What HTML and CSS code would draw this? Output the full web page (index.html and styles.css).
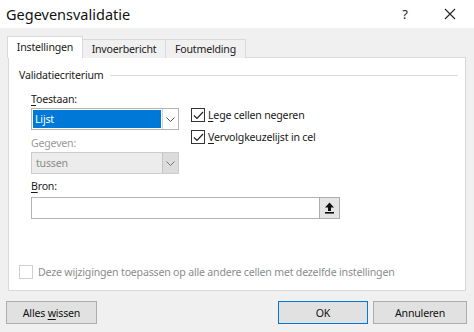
FILE: index.html
```html
<!DOCTYPE html>
<html lang="nl">
<head>
  <meta charset="UTF-8">
  <title>Gegevensvalidatie</title>
  <link rel="stylesheet" href="styles.css">
</head>
<body>
  <div class="titlebar">
    <span class="title">Gegevensvalidatie</span>
    <span class="help">?</span>
    <span class="close">
      <svg width="12" height="12" viewBox="0 0 12 12"><path d="M1 1 L11 11 M11 1 L1 11" stroke="#222" stroke-width="1.1" fill="none"/></svg>
    </span>
  </div>

  <div class="dialog">
    <div class="tabs">
      <div class="tab active">Instellingen</div>
      <div class="tab">Invoerbericht</div>
      <div class="tab">Foutmelding</div>
    </div>

    <div class="panel">
      <div class="legend">
        <span>Validatiecriterium</span>
        <div class="rule"></div>
      </div>

      <div class="criteria">
        <div class="left-col">
          <label class="label"><u>T</u>oestaan:</label>
          <div class="select">
            <div class="select-value"><span class="selected">Lijst</span></div>
            <div class="select-btn">
              <svg width="9" height="5" viewBox="0 0 9 5"><path d="M0.5 0.5 L4.5 4.5 L8.5 0.5" stroke="#555" fill="none"/></svg>
            </div>
          </div>
          <label class="label disabled">Gegeven:</label>
          <div class="select is-disabled">
            <div class="select-value">tussen</div>
            <div class="select-btn">
              <svg width="9" height="5" viewBox="0 0 9 5"><path d="M0.5 0.5 L4.5 4.5 L8.5 0.5" stroke="#777" fill="none"/></svg>
            </div>
          </div>
        </div>
        <div class="right-col">
          <div class="check-row">
            <span class="box checked"><svg width="11" height="9" viewBox="0 0 11 9"><path d="M1 4.5 L4 7.5 L10 1" stroke="#222" stroke-width="1.2" fill="none"/></svg></span>
            <span><u>L</u>ege cellen negeren</span>
          </div>
          <div class="check-row">
            <span class="box checked"><svg width="11" height="9" viewBox="0 0 11 9"><path d="M1 4.5 L4 7.5 L10 1" stroke="#222" stroke-width="1.2" fill="none"/></svg></span>
            <span><u>V</u>ervolgkeuzelijst in cel</span>
          </div>
        </div>
      </div>

      <div class="source">
        <label class="label"><u>B</u>ron:</label>
        <div class="source-field">
          <div class="source-input"></div>
          <div class="source-btn">
            <svg width="11" height="12" viewBox="0 0 11 12"><path d="M5.5 0.5 L10 5.5 L7 5.5 L7 9 L4 9 L4 5.5 L1 5.5 Z" fill="#111"/><rect x="1" y="10" width="9" height="1.6" fill="#111"/></svg>
          </div>
        </div>
      </div>

      <div class="apply-row">
        <span class="box faded"></span>
        <span>Deze wijzigingen toepassen op alle andere cellen met dezelfde instellingen</span>
      </div>
    </div>

    <div class="buttons">
      <button class="btn">Alles <u>w</u>issen</button>
      <div class="spacer"></div>
      <button class="btn default">OK</button>
      <button class="btn">Annuleren</button>
    </div>
  </div>
</body>
</html>
```

FILE: styles.css
```css
* {
  box-sizing: border-box;
}

body {
  margin: 0;
  width: 474px;
  height: 332px;
  overflow: hidden;
  background: #f0f0f0;
  font-family: "Segoe UI", "Noto Sans", sans-serif;
  font-size: 10.6px;
  letter-spacing: -0.2px;
  color: #1a1a1a;
  white-space: nowrap;
}

u {
  text-decoration-thickness: 1px;
  text-underline-offset: 2px;
}

/* Title bar */
.titlebar {
  height: 28px;
  background: #fff;
  display: flex;
  align-items: center;
  padding-left: 6px;
  letter-spacing: 0;
}

.title {
  font-size: 14.5px;
  color: #111;
  flex: 1;
}

.help {
  font-size: 13px;
  width: 46px;
  text-align: center;
}

.close {
  width: 46px;
  display: flex;
  justify-content: center;
  padding-right: 2px;
}

/* Dialog body */
.dialog {
  padding: 9px 8px 0 8px;
}

.tabs {
  display: flex;
  align-items: flex-end;
  height: 21px;
  position: relative;
  z-index: 1;
  margin-bottom: -1px;
}

.tab {
  height: 19px;
  border: 1px solid #d9d9d9;
  border-bottom: none;
  border-left: none;
  background: #f0f0f0;
  display: flex;
  align-items: center;
  justify-content: center;
  padding-bottom: 1px;
}

.tab.active {
  width: 76px;
  height: 22px;
  background: #fff;
  border-left: 1px solid #d9d9d9;
  margin-left: -1px;
  padding-bottom: 2px;
}

.tab:nth-child(2) {
  width: 83px;
}

.tab:nth-child(3) {
  width: 80px;
}

.panel {
  background: #fff;
  border: 1px solid #d9d9d9;
  height: 234px;
  padding: 9px 7px 0 10px;
  display: flex;
  flex-direction: column;
}

.legend {
  display: flex;
  align-items: center;
  gap: 6px;
  height: 16px;
}

.rule {
  flex: 1;
  height: 1px;
  background: #dcdcdc;
}

.criteria {
  display: flex;
  padding-left: 12px;
  margin-top: 8px;
}

.left-col {
  width: 148px;
  display: flex;
  flex-direction: column;
}

.label {
  height: 16px;
  line-height: 16px;
}

.label.disabled {
  color: #9a9a9a;
  margin-top: 5px;
}

.select {
  height: 22px;
  border: 1px solid #b4b4b4;
  display: flex;
  margin-top: 1px;
}

.select-value {
  flex: 1;
  padding: 1px;
  display: flex;
}

.selected {
  flex: 1;
  background: #0078d7;
  color: #fff;
  padding-left: 2px;
  line-height: 18px;
}

.select-btn {
  width: 16px;
  border-left: 1px solid #d4d4d4;
  display: flex;
  align-items: center;
  justify-content: center;
  background: #fff;
}

.select.is-disabled {
  background: #ececec;
  border-color: #cccccc;
}

.select.is-disabled .select-value {
  color: #8a8a8a;
  padding-left: 4px;
  align-items: center;
}

.select.is-disabled .select-btn {
  background: #dcdcdc;
  border-left-color: #c4c4c4;
}

.right-col {
  margin-left: 12px;
  padding-top: 17px;
  display: flex;
  flex-direction: column;
  gap: 8px;
}

.check-row {
  display: flex;
  align-items: center;
  gap: 3px;
  height: 14px;
}

.box {
  width: 14px;
  height: 14px;
  border: 1px solid #333;
  background: #fff;
  display: flex;
  align-items: center;
  justify-content: center;
}

.box.faded {
  border-color: #cfcfcf;
}

.source {
  padding-left: 12px;
  margin-top: 4px;
  display: flex;
  flex-direction: column;
}

.source-field {
  display: flex;
  width: 309px;
  height: 22px;
  margin-top: 3px;
}

.source-input {
  flex: 1;
  border: 1px solid #b4b4b4;
  border-right: none;
}

.source-btn {
  width: 21px;
  border: 1px solid #adadad;
  background: #e5e5e5;
  display: flex;
  align-items: center;
  justify-content: center;
}

.apply-row {
  margin-top: auto;
  margin-bottom: 11px;
  display: flex;
  align-items: center;
  gap: 5px;
  color: #8c8c8c;
}

/* Buttons */
.buttons {
  display: flex;
  margin-top: 10px;
  margin-left: -2px;
  gap: 5px;
}

.spacer {
  flex: 1;
}

.btn {
  height: 23px;
  width: 91px;
  background: #e1e1e1;
  border: 1px solid #adadad;
  font-family: inherit;
  font-size: 10.6px;
  letter-spacing: -0.2px;
  color: #111;
  padding: 0;
}

.btn.default {
  border: 1px solid #0078d7;
  width: 90px;
}

.btn:last-child {
  width: 94px;
  margin-right: -1px;
}
```
